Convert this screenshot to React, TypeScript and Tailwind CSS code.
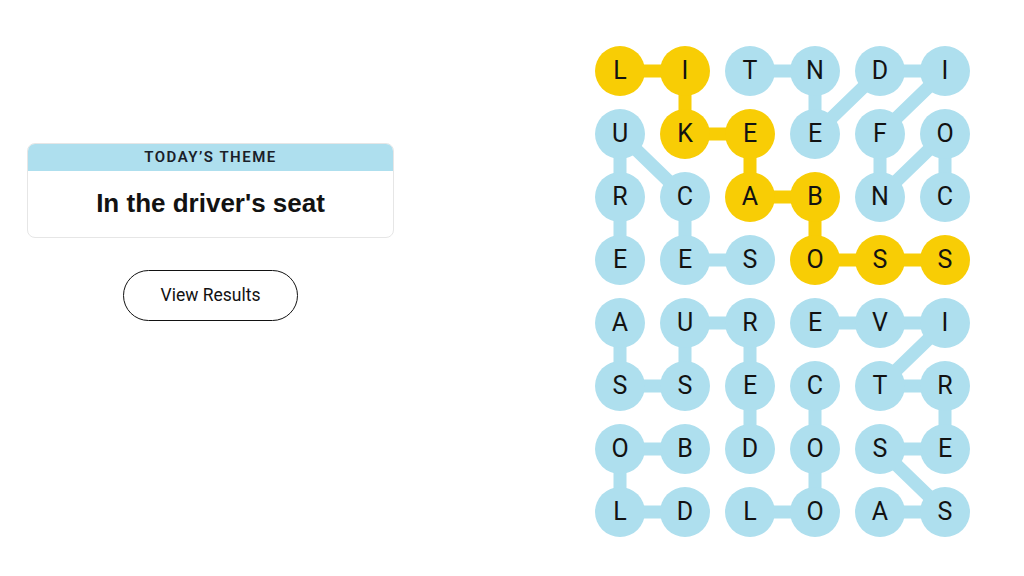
import React from 'react';

const letters = [
  'LITNDI',
  'UKEEFO',
  'RCABNC',
  'EESOSS',
  'AUREVI',
  'SSECTR',
  'OBDOSE',
  'LDLOAS',
];

// cells as [row, col]; each word is a path through the grid
type Cell = [number, number];

const spangram: Cell[] = [
  [0, 0], [0, 1], [1, 1], [1, 2], [2, 2], [2, 3], [3, 3], [3, 4], [3, 5],
];

const words: Cell[][] = [
  // CONFIDENT
  [[2, 5], [1, 5], [2, 4], [1, 4], [0, 5], [0, 4], [1, 3], [0, 3], [0, 2]],
  // SECURE
  [[3, 2], [3, 1], [2, 1], [1, 0], [2, 0], [3, 0]],
  // ASSURED
  [[4, 0], [5, 0], [5, 1], [4, 1], [4, 2], [5, 2], [6, 2]],
  // BOLD
  [[6, 1], [6, 0], [7, 0], [7, 1]],
  // COOL
  [[5, 3], [6, 3], [7, 3], [7, 2]],
  // ASSERTIVE
  [[7, 4], [7, 5], [6, 4], [6, 5], [5, 5], [5, 4], [4, 5], [4, 4], [4, 3]],
];

const CELL = 50;
const GAP_X = 15;
const GAP_Y = 13;
const cx = (c: number) => c * (CELL + GAP_X) + CELL / 2;
const cy = (r: number) => r * (CELL + GAP_Y) + CELL / 2;

const BLUE = '#aedfee';
const YELLOW = '#f8cd05';

const spanSet = new Set(spangram.map(([r, c]) => `${r}-${c}`));

function PathLine({ cells, color }: { cells: Cell[]; color: string }) {
  const pts = cells.map(([r, c]) => `${cx(c)},${cy(r)}`).join(' ');
  return (
    <polyline
      points={pts}
      fill="none"
      stroke={color}
      strokeWidth={13}
      strokeLinejoin="round"
      strokeLinecap="round"
    />
  );
}

function Board() {
  return (
    <div className="relative w-[375px] h-[491px]">
      <svg className="absolute inset-0" width={375} height={491}>
        {words.map((w, i) => (
          <PathLine key={i} cells={w} color={BLUE} />
        ))}
        <PathLine cells={spangram} color={YELLOW} />
      </svg>
      <div className="relative grid grid-cols-[repeat(6,50px)] grid-rows-[repeat(8,50px)] gap-x-[15px] gap-y-[13px]">
        {letters.map((row, r) =>
          row.split('').map((ch, c) => (
            <div
              key={`${r}-${c}`}
              className={`w-[50px] h-[50px] rounded-full flex items-center justify-center text-[25px] text-[#121212] ${
                spanSet.has(`${r}-${c}`) ? 'bg-[#f8cd05]' : 'bg-[#aedfee]'
              }`}
            >
              {ch}
            </div>
          ))
        )}
      </div>
    </div>
  );
}

export default function App() {
  return (
    <div className="w-[1024px] h-[576px] bg-white flex font-['Roboto',sans-serif] text-[#121212]">
      <div className="pl-[27px] pt-[143px] flex flex-col items-center w-[394px]">
        <div className="w-[367px] rounded-[8px] border border-[#e6e6e6] overflow-hidden">
          <div className="bg-[#aedfee] h-[27px] flex items-center justify-center text-[15px] font-semibold tracking-[0.1em] text-[#1a2028]">
            TODAY’S THEME
          </div>
          <div className="h-[66px] flex items-center justify-center pb-[2px] font-['Liberation_Sans',sans-serif] text-[26px] font-bold">
            In the driver's seat
          </div>
        </div>
        <button className="mt-[32px] w-[175px] h-[51px] rounded-full border border-[#121212] text-[17.5px] text-[#121212]">
          View Results
        </button>
      </div>
      <div className="ml-auto mr-[54px] pt-[46px]">
        <Board />
      </div>
    </div>
  );
}
